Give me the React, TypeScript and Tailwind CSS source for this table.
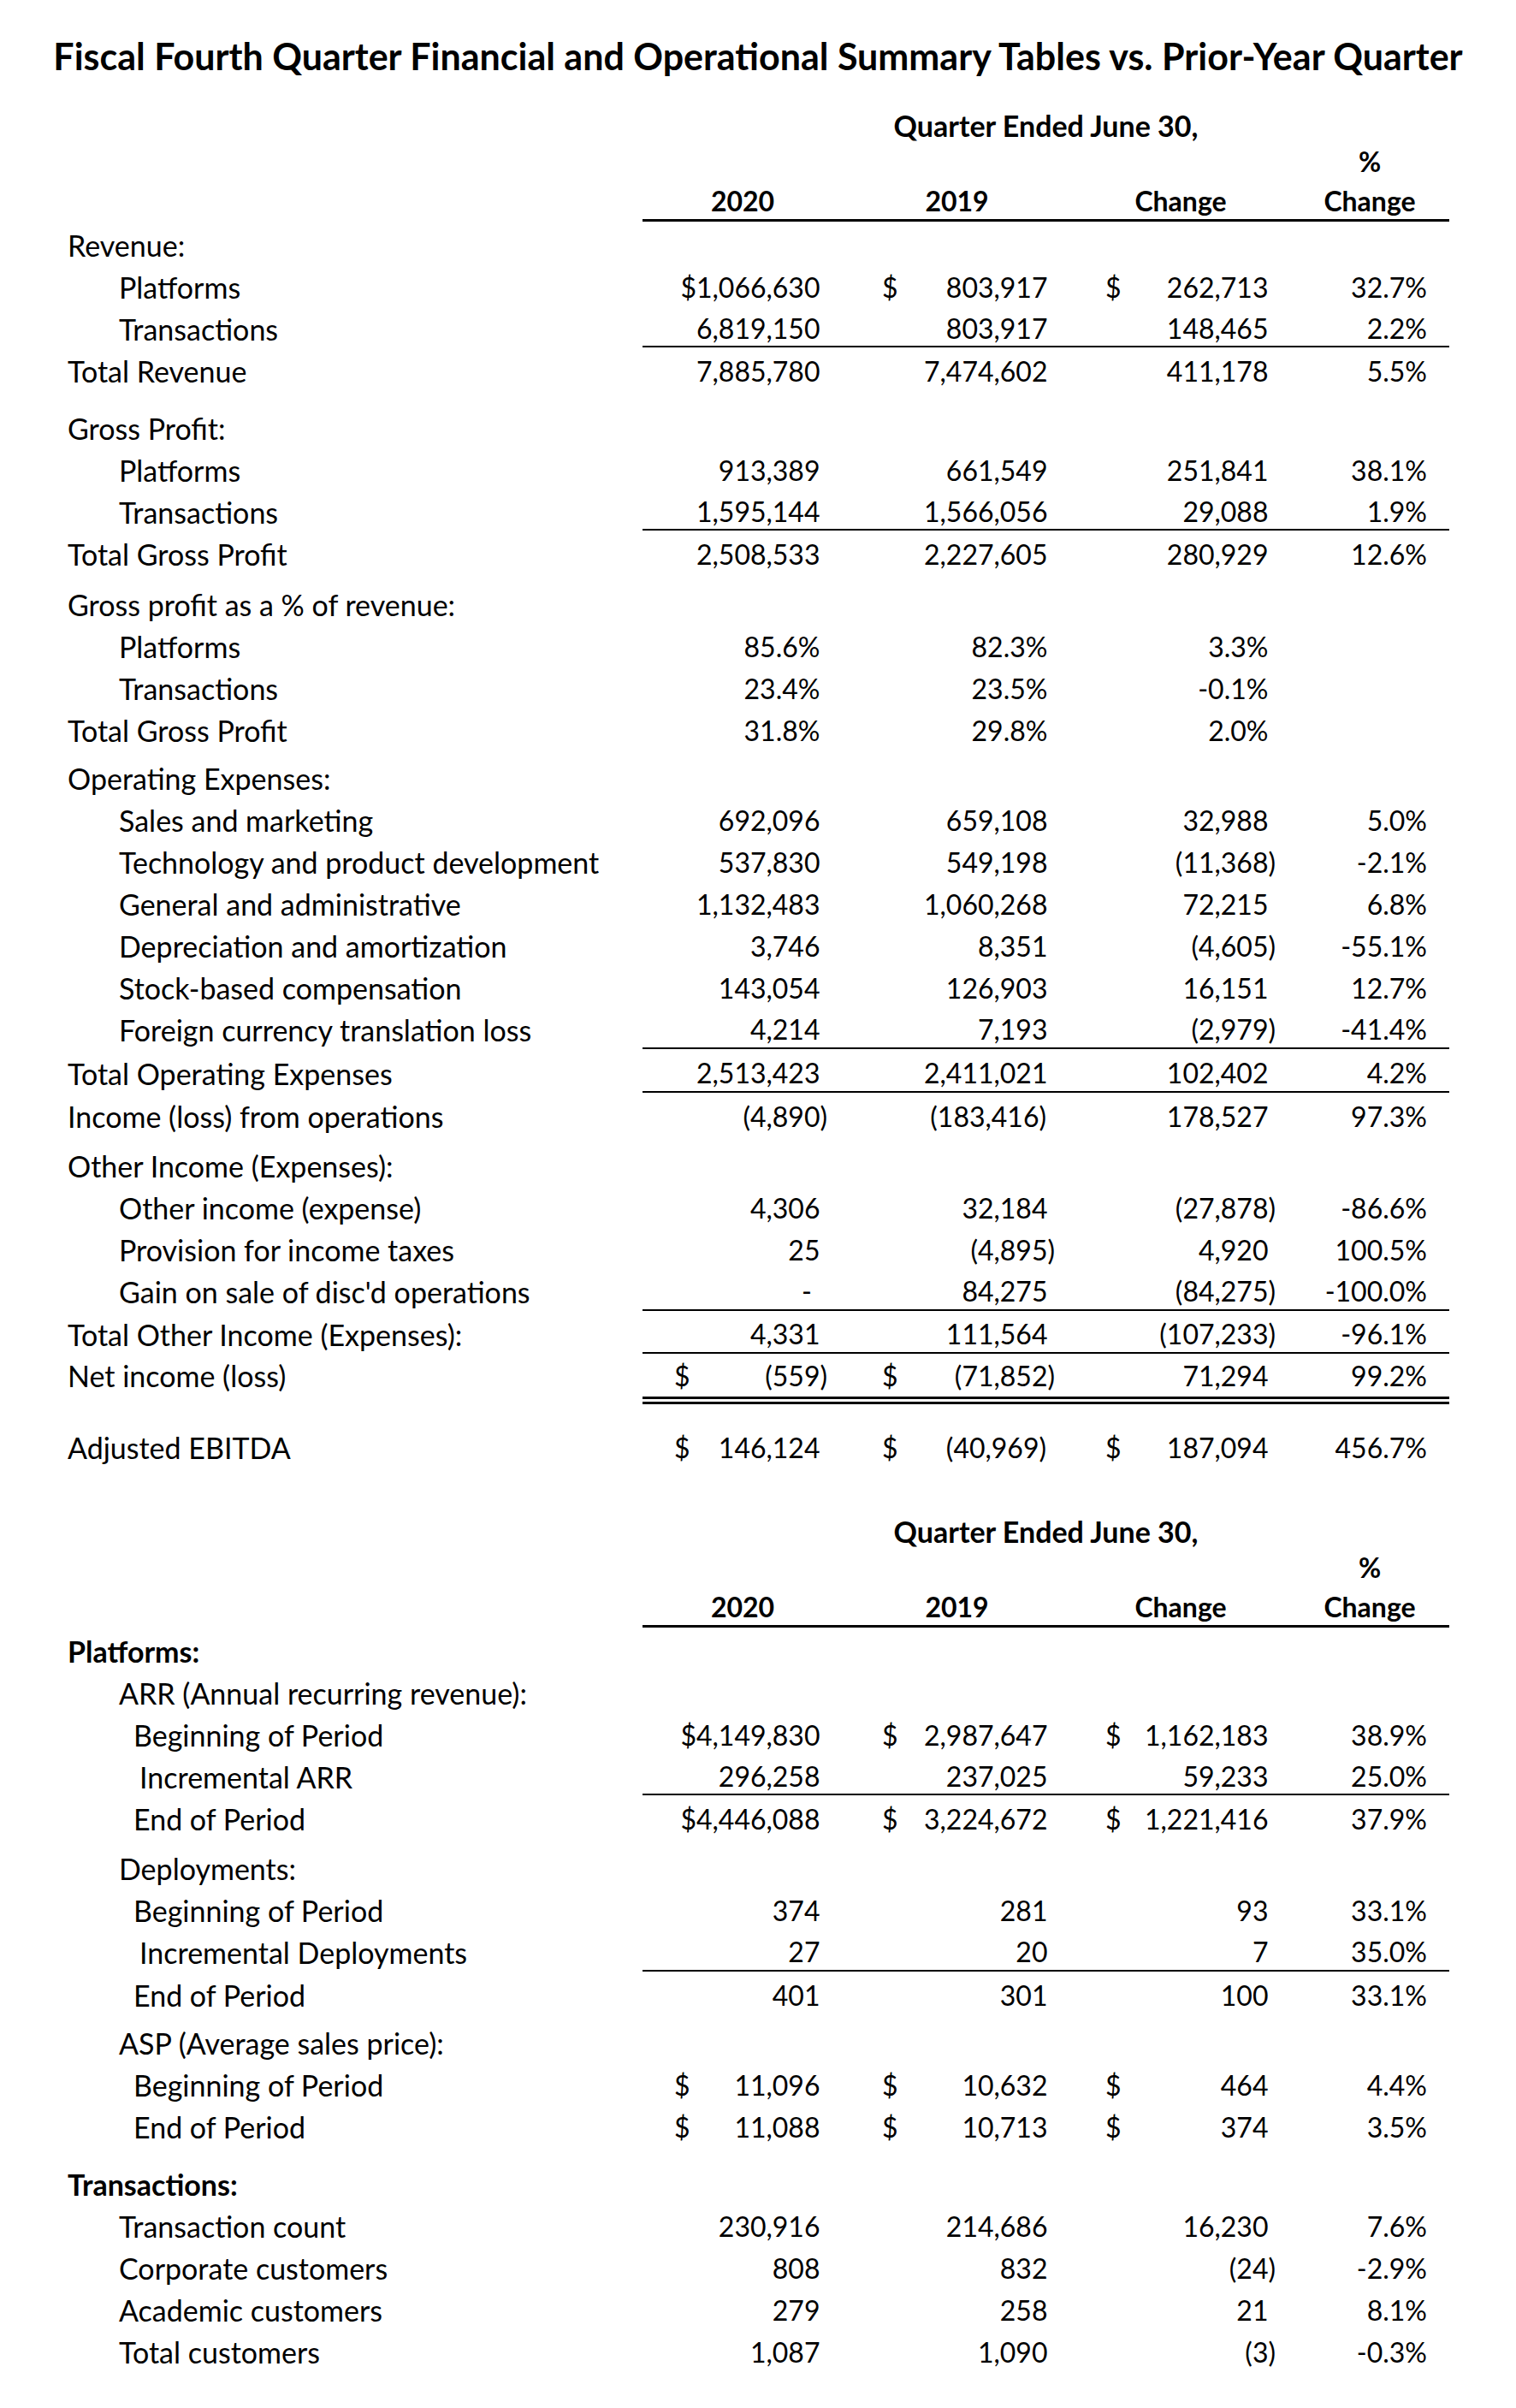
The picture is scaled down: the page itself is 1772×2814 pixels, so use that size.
import React from "react";

type Cell = { d?: boolean; v: string; nh?: boolean } | null;
type Row =
  | {
      k: "r";
      label: string;
      ind: string;
      bold?: boolean;
      c?: [Cell, Cell, Cell, string];
      h: string;
      line?: "s" | "d";
    }
  | { k: "g"; h: string };

const I0 = "pl-[79px]";
const I1 = "pl-[139px]";
const I2 = "pl-[156px]";
const I3 = "pl-[163px]";

const n = (v: string, d?: boolean, nh?: boolean): Cell => ({ v, d, nh });

const table1: Row[] = [
  { k: "r", label: "Revenue:", ind: I0, h: "h-[49px]" },
  { k: "r", label: "Platforms", ind: I1, h: "h-[49px]", c: [n("$1,066,630"), n("803,917", true), n("262,713", true), "32.7%"] },
  { k: "r", label: "Transactions", ind: I1, h: "h-[49px]", line: "s", c: [n("6,819,150"), n("803,917"), n("148,465"), "2.2%"] },
  { k: "r", label: "Total Revenue", ind: I0, h: "h-[49px]", c: [n("7,885,780"), n("7,474,602"), n("411,178"), "5.5%"] },
  { k: "g", h: "h-[18px]" },
  { k: "r", label: "Gross Profit:", ind: I0, h: "h-[49px]" },
  { k: "r", label: "Platforms", ind: I1, h: "h-[49px]", c: [n("913,389"), n("661,549"), n("251,841"), "38.1%"] },
  { k: "r", label: "Transactions", ind: I1, h: "h-[49px]", line: "s", c: [n("1,595,144"), n("1,566,056"), n("29,088"), "1.9%"] },
  { k: "r", label: "Total Gross Profit", ind: I0, h: "h-[49px]", c: [n("2,508,533"), n("2,227,605"), n("280,929"), "12.6%"] },
  { k: "g", h: "h-[10px]" },
  { k: "r", label: "Gross profit as a % of revenue:", ind: I0, h: "h-[49px]" },
  { k: "r", label: "Platforms", ind: I1, h: "h-[49px]", c: [n("85.6%"), n("82.3%"), n("3.3%"), ""] },
  { k: "r", label: "Transactions", ind: I1, h: "h-[49px]", c: [n("23.4%"), n("23.5%"), n("-0.1%"), ""] },
  { k: "r", label: "Total Gross Profit", ind: I0, h: "h-[49px]", c: [n("31.8%"), n("29.8%"), n("2.0%"), ""] },
  { k: "g", h: "h-[7px]" },
  { k: "r", label: "Operating Expenses:", ind: I0, h: "h-[49px]" },
  { k: "r", label: "Sales and marketing", ind: I1, h: "h-[49px]", c: [n("692,096"), n("659,108"), n("32,988"), "5.0%"] },
  { k: "r", label: "Technology and product development", ind: I1, h: "h-[49px]", c: [n("537,830"), n("549,198"), n("(11,368)"), "-2.1%"] },
  { k: "r", label: "General and administrative", ind: I1, h: "h-[49px]", c: [n("1,132,483"), n("1,060,268"), n("72,215"), "6.8%"] },
  { k: "r", label: "Depreciation and amortization", ind: I1, h: "h-[49px]", c: [n("3,746"), n("8,351"), n("(4,605)"), "-55.1%"] },
  { k: "r", label: "Stock-based compensation", ind: I1, h: "h-[49px]", c: [n("143,054"), n("126,903"), n("16,151"), "12.7%"] },
  { k: "r", label: "Foreign currency translation loss", ind: I1, h: "h-[50px]", line: "s", c: [n("4,214"), n("7,193"), n("(2,979)"), "-41.4%"] },
  { k: "r", label: "Total Operating Expenses", ind: I0, h: "h-[51px]", line: "s", c: [n("2,513,423"), n("2,411,021"), n("102,402"), "4.2%"] },
  { k: "r", label: "Income (loss) from operations", ind: I0, h: "h-[49px]", c: [n("(4,890)"), n("(183,416)", false, true), n("178,527"), "97.3%"] },
  { k: "g", h: "h-[9px]" },
  { k: "r", label: "Other Income (Expenses):", ind: I0, h: "h-[49px]" },
  { k: "r", label: "Other income (expense)", ind: I1, h: "h-[49px]", c: [n("4,306"), n("32,184"), n("(27,878)"), "-86.6%"] },
  { k: "r", label: "Provision for income taxes", ind: I1, h: "h-[49px]", c: [n("25"), n("(4,895)"), n("4,920"), "100.5%"] },
  { k: "r", label: "Gain on sale of disc'd operations", ind: I1, h: "h-[50px]", line: "s", c: [n("-"), n("84,275"), n("(84,275)"), "-100.0%"] },
  { k: "r", label: "Total Other Income (Expenses):", ind: I0, h: "h-[50px]", line: "s", c: [n("4,331"), n("111,564"), n("(107,233)"), "-96.1%"] },
  { k: "r", label: "Net income (loss)", ind: I0, h: "h-[59px]", line: "d", c: [n("(559)", true), n("(71,852)", true), n("71,294"), "99.2%"] },
  { k: "g", h: "h-[23px]" },
  { k: "r", label: "Adjusted EBITDA", ind: I0, h: "h-[49px]", c: [n("146,124", true), n("(40,969)", true, true), n("187,094", true), "456.7%"] },
];

const table2: Row[] = [
  { k: "r", label: "Platforms:", ind: I0, bold: true, h: "h-[49px]" },
  { k: "r", label: "ARR (Annual recurring revenue):", ind: I1, h: "h-[49px]" },
  { k: "r", label: "Beginning of Period", ind: I2, h: "h-[49px]", c: [n("$4,149,830"), n("2,987,647", true), n("1,162,183", true), "38.9%"] },
  { k: "r", label: "Incremental ARR", ind: I3, h: "h-[49px]", line: "s", c: [n("296,258"), n("237,025"), n("59,233"), "25.0%"] },
  { k: "r", label: "End of Period", ind: I2, h: "h-[49px]", c: [n("$4,446,088"), n("3,224,672", true), n("1,221,416", true), "37.9%"] },
  { k: "g", h: "h-[9px]" },
  { k: "r", label: "Deployments:", ind: I1, h: "h-[49px]" },
  { k: "r", label: "Beginning of Period", ind: I2, h: "h-[49px]", c: [n("374"), n("281"), n("93"), "33.1%"] },
  { k: "r", label: "Incremental Deployments", ind: I3, h: "h-[50px]", line: "s", c: [n("27"), n("20"), n("7"), "35.0%"] },
  { k: "r", label: "End of Period", ind: I2, h: "h-[49px]", c: [n("401"), n("301"), n("100"), "33.1%"] },
  { k: "g", h: "h-[7px]" },
  { k: "r", label: "ASP (Average sales price):", ind: I1, h: "h-[49px]" },
  { k: "r", label: "Beginning of Period", ind: I2, h: "h-[49px]", c: [n("11,096", true), n("10,632", true), n("464", true), "4.4%"] },
  { k: "r", label: "End of Period", ind: I2, h: "h-[49px]", c: [n("11,088", true), n("10,713", true), n("374", true), "3.5%"] },
  { k: "g", h: "h-[18px]" },
  { k: "r", label: "Transactions:", ind: I0, bold: true, h: "h-[49px]" },
  { k: "r", label: "Transaction count", ind: I1, h: "h-[49px]", c: [n("230,916"), n("214,686"), n("16,230"), "7.6%"] },
  { k: "r", label: "Corporate customers", ind: I1, h: "h-[49px]", c: [n("808"), n("832"), n("(24)"), "-2.9%"] },
  { k: "r", label: "Academic customers", ind: I1, h: "h-[49px]", c: [n("279"), n("258"), n("21"), "8.1%"] },
  { k: "r", label: "Total customers", ind: I1, h: "h-[49px]", c: [n("1,087"), n("1,090"), n("(3)"), "-0.3%"] },
];

const GRID = "grid grid-cols-[751px_234px_267px_256px_186px]";
const PADS = ["pl-[37px] pr-[18px]", "pl-[46px] pr-[19px]", "pl-[40px] pr-[17px]"];

function lineCls(line?: "s" | "d") {
  if (line === "s") return "border-b-2 border-black pt-[6px]";
  if (line === "d") return "border-b-[9px] border-double border-black pt-[2px]";
  return "pt-[6px]";
}

function Value({ c }: { c: NonNullable<Cell> }) {
  const v = c.v;
  if (v === "-") return <span className="mr-[18px]">-</span>;
  if (v.endsWith(")") && !c.nh) return <span>{v}</span>;
  if (v.endsWith(")") && c.nh) return <span className="mr-[10px]">{v}</span>;
  return (
    <span>
      {v}
      <span className="invisible">)</span>
    </span>
  );
}

function NumCell({ c, i, line }: { c: Cell; i: number; line?: "s" | "d" }) {
  return (
    <div className={`flex items-center justify-between ${PADS[i]} ${lineCls(line)}`}>
      <span>{c && c.d ? "$" : ""}</span>
      {c ? <Value c={c} /> : <span />}
    </div>
  );
}

function Body({ rows }: { rows: Row[] }) {
  return (
    <>
      {rows.map((r, idx) => {
        if (r.k === "g") return <div key={idx} className={r.h} />;
        return (
          <div key={idx} className={`${GRID} ${r.h}`}>
            <div
              className={`flex items-center whitespace-nowrap text-[34px] ${r.line === "d" ? "pt-[2px] pb-[9px]" : "pt-[6px]"} ${r.ind} ${r.bold ? "font-bold" : ""}`}
            >
              {r.label}
            </div>
            {r.c ? (
              <>
                <NumCell c={r.c[0]} i={0} line={r.line} />
                <NumCell c={r.c[1]} i={1} line={r.line} />
                <NumCell c={r.c[2]} i={2} line={r.line} />
                <div className={`flex items-center justify-end pr-[26px] ${lineCls(r.line)}`}>{r.c[3]}</div>
              </>
            ) : (
              <>
                <div />
                <div />
                <div />
                <div />
              </>
            )}
          </div>
        );
      })}
    </>
  );
}

function Header() {
  return (
    <div className="font-bold">
      <div className={`${GRID} h-[34px]`}>
        <div />
        <div className="col-span-4 flex items-center justify-center text-[34px]">Quarter Ended June 30,</div>
      </div>
      <div className={`${GRID} h-[50px]`}>
        <div />
        <div />
        <div />
        <div />
        <div className="flex items-center justify-center">%</div>
      </div>
      <div className={`${GRID} h-[45px]`}>
        <div />
        <div className="flex items-center justify-center border-b-[3px] border-black">2020</div>
        <div className="flex items-center justify-center border-b-[3px] border-black">2019</div>
        <div className="flex items-center justify-center border-b-[3px] border-black">Change</div>
        <div className="flex items-center justify-center border-b-[3px] border-black">Change</div>
      </div>
    </div>
  );
}

export default function App() {
  return (
    <div className="w-[1772px] h-[2814px] bg-white text-black font-['Lato',sans-serif] text-[32px] leading-none">
      <div className="h-[130px] flex items-center justify-center font-bold text-[43px] whitespace-nowrap">
        Fiscal Fourth Quarter Financial and Operational Summary Tables vs. Prior-Year Quarter
      </div>
      <Header />
      <Body rows={table1} />
      <div className="h-[60px]" />
      <Header />
      <Body rows={table2} />
    </div>
  );
}
